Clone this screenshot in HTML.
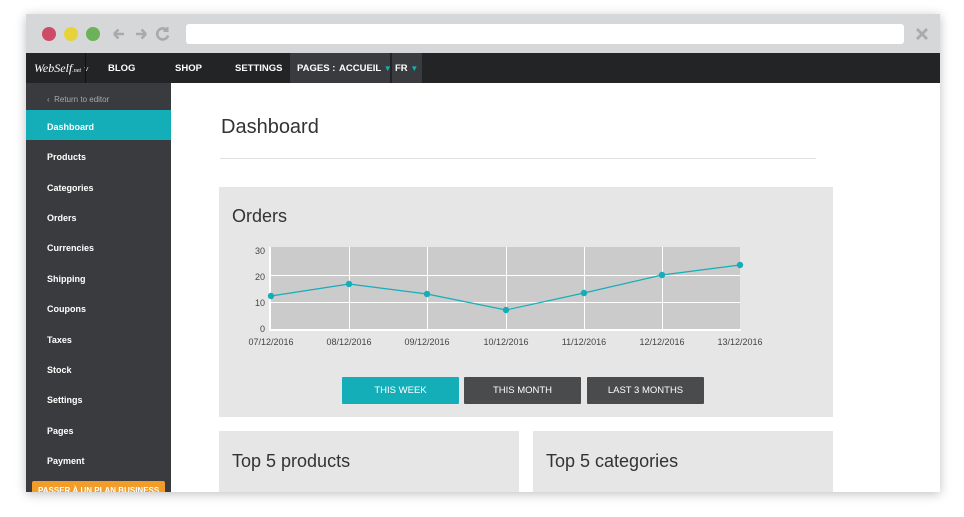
<!DOCTYPE html>
<html><head><style>
*{margin:0;padding:0;box-sizing:border-box}
body{width:964px;height:517px;background:#fff;position:relative;overflow:hidden;font-family:"Liberation Sans",sans-serif}
div,span{white-space:nowrap}
.win{position:absolute;left:26px;top:14px;width:914px;height:478px;box-shadow:0 2px 10px rgba(0,0,0,.25);overflow:hidden;background:#fff}
.tb{position:absolute;left:0;top:0;width:914px;height:39px;background:#d6d7d9}
.dot{position:absolute;top:13px;width:14px;height:14px;border-radius:50%}
.url{position:absolute;left:160px;top:10px;width:718px;height:20px;background:#fff;border-radius:3px}
.nav{position:absolute;left:0;top:39px;width:914px;height:30px;background:#232426;color:#fff;font-size:9.5px;font-weight:bold}
.nav span{position:absolute;top:10px}
.side{position:absolute;left:0;top:69px;width:145px;height:409px;background:#3a3b3e}
.side div{position:absolute;left:21px;font-size:9px;font-weight:bold;color:#fff}
.main{position:absolute;left:145px;top:69px}
.panel{position:absolute;background:#e6e6e6}
.btn{position:absolute;top:363px;height:27px;width:117px;color:#fff;font-size:9.5px;text-align:center;line-height:27px;border-radius:1px}
.h{position:absolute;font-size:18px;color:#333}
</style></head><body>
<div class="win">
<div class="tb">
<div class="dot" style="left:16px;background:#cf4a66"></div>
<div class="dot" style="left:38px;background:#e6d33a"></div>
<div class="dot" style="left:60px;background:#6db15a"></div>
<svg style="position:absolute;left:85px;top:12px" width="60" height="16" fill="none" stroke="#aaa" stroke-width="2.6">
<path d="M3 8H13M3 8L7.5 3.5M3 8L7.5 12.5"/>
<path d="M25 8H35M35 8L30.5 3.5M35 8L30.5 12.5"/>
<path d="M56 4.5A5.5 5.5 0 1 0 57 9.5"/><path d="M56.5 1V5H52.5" stroke-width="2"/>
</svg>
<div class="url"></div>
<svg style="position:absolute;left:890px;top:14px" width="12" height="12" stroke="#aaa" stroke-width="2.8"><path d="M1 1L11 11M11 1L1 11"/></svg>
</div>
<div class="nav">
<span style="left:8px;top:8px;font-family:'Liberation Serif',serif;font-style:italic;font-weight:normal;font-size:12px">WebSelf<small style="font-size:6px">.net</small> <b style="font-style:normal;font-size:8px">˅</b></span>
<div style="position:absolute;left:59px;top:0;width:1px;height:30px;background:#111"></div>
<span style="left:82px">BLOG</span>
<span style="left:149px">SHOP</span>
<span style="left:209px">SETTINGS</span>
<div style="position:absolute;left:264px;top:0;width:100px;height:30px;background:#3a3b3e"></div>
<span style="left:271px">PAGES :</span><span style="left:313px">ACCUEIL <b style="color:#14aeb8;font-size:8px">▼</b></span>
<div style="position:absolute;left:366px;top:0;width:30px;height:30px;background:#3a3b3e"></div>
<span style="left:369px">FR <b style="color:#14aeb8;font-size:8px">▼</b></span>
</div>
<div class="side">
<div style="top:12px;color:#aaa;font-weight:normal;font-size:8px">‹ &nbsp;Return to editor</div>
<div style="left:0;top:27px;width:145px;height:30px;background:#13aeb8"></div>
<div style="top:39px">Dashboard</div>
<div style="top:69px">Products</div>
<div style="top:100px">Categories</div>
<div style="top:130px">Orders</div>
<div style="top:160px">Currencies</div>
<div style="top:191px">Shipping</div>
<div style="top:221px">Coupons</div>
<div style="top:252px">Taxes</div>
<div style="top:282px">Stock</div>
<div style="top:312px">Settings</div>
<div style="top:343px">Pages</div>
<div style="top:373px">Payment</div>
<div style="left:6px;top:398px;width:133px;height:16px;background:#f29d2a;border-radius:2px;font-size:8px;padding:5px 6px;overflow:hidden">PASSER À UN PLAN BUSINESS</div>
</div>
<div class="main">
<div style="position:absolute;left:50px;top:33px;font-size:20px;color:#333">Dashboard</div>
<div style="position:absolute;left:49px;top:75px;width:596px;height:1px;background:#e0e0e0"></div>
<div class="panel" style="left:48px;top:104px;width:614px;height:230px"></div>
<div class="panel" style="left:48px;top:348px;width:300px;height:70px"></div>
<div class="panel" style="left:362px;top:348px;width:300px;height:70px"></div>
<div class="h" style="left:61px;top:123px">Orders</div>
<div class="h" style="left:61px;top:368px">Top 5 products</div>
<div class="h" style="left:375px;top:368px">Top 5 categories</div>
</div>
<div class="btn" style="left:316px;background:#14aeb8">THIS WEEK</div>
<div class="btn" style="left:438px;background:#4a4b4d">THIS MONTH</div>
<div class="btn" style="left:561px;background:#4a4b4d">LAST 3 MONTHS</div>
</div>
<svg style="position:absolute;left:0;top:0" width="964" height="517">
<rect x="270" y="247" width="470" height="82" fill="#cbcbcb"/>
<g stroke="#fff" stroke-width="1">
<line x1="270" y1="275.5" x2="740" y2="275.5"/><line x1="270" y1="302.5" x2="740" y2="302.5"/>
<line x1="349.5" y1="247" x2="349.5" y2="329"/><line x1="427.5" y1="247" x2="427.5" y2="329"/>
<line x1="506.5" y1="247" x2="506.5" y2="329"/><line x1="584.5" y1="247" x2="584.5" y2="329"/>
<line x1="662.5" y1="247" x2="662.5" y2="329"/>
</g>
<rect x="269" y="329" width="472" height="2" fill="#fff"/>
<rect x="269" y="247" width="2" height="84" fill="#fff"/>
<polyline fill="none" stroke="#14aeb8" stroke-width="1.2" points="271,296 349,284 427,294 506,310 584,293 662,275 740,265"/>
<g fill="#14aeb8"><circle cx="271" cy="296" r="3.2"/><circle cx="349" cy="284" r="3.2"/><circle cx="427" cy="294" r="3.2"/><circle cx="506" cy="310" r="3.2"/><circle cx="584" cy="293" r="3.2"/><circle cx="662" cy="275" r="3.2"/><circle cx="740" cy="265" r="3.2"/></g>
<g font-family="Liberation Sans" font-size="9" fill="#444" text-anchor="end">
<text x="265" y="254">30</text><text x="265" y="280">20</text><text x="265" y="306">10</text><text x="265" y="332">0</text></g>
<g font-family="Liberation Sans" font-size="9" fill="#444" text-anchor="middle">
<text x="271" y="345">07/12/2016</text><text x="349" y="345">08/12/2016</text><text x="427" y="345">09/12/2016</text><text x="506" y="345">10/12/2016</text><text x="584" y="345">11/12/2016</text><text x="662" y="345">12/12/2016</text><text x="740" y="345">13/12/2016</text></g>
</svg>
</body></html>
